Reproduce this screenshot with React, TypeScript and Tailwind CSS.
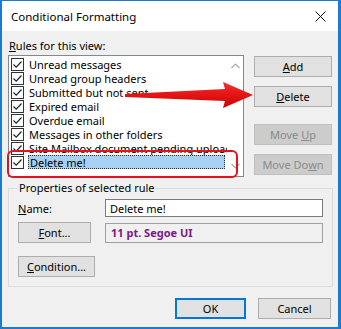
import React from 'react';

// Conditional Formatting dialog (Outlook, Windows 10 look)

const font = { fontFamily: '"Noto Sans", "Open Sans", Arial, sans-serif' };

const rules = [
  'Unread messages',
  'Unread group headers',
  'Submitted but not sent',
  'Expired email',
  'Overdue email',
  'Messages in other folders',
  'Site Mailbox document pending upload',
  'Delete me!',
];

function Check() {
  return (
    <div className="w-[13px] h-[13px] shrink-0 border border-[#333] bg-white flex items-center justify-center">
      <svg width="11" height="11" viewBox="0 0 11 11" fill="none" stroke="#222" strokeWidth="1.2">
        <path d="M1.5 5.5 L4.2 8.2 L9.5 2.5" />
      </svg>
    </div>
  );
}

function Btn({
  children,
  disabled,
  primary,
  className = '',
}: {
  children: React.ReactNode;
  disabled?: boolean;
  primary?: boolean;
  className?: string;
}) {
  const tone = disabled
    ? 'bg-[#cccccc] border-[#bfbfbf] text-[#8a8a8a]'
    : primary
      ? 'bg-[#e1e1e1] border-2 border-[#0078d7] text-black'
      : 'bg-[#e1e1e1] border-[#adadad] text-black';
  return (
    <div className={`h-[21px] border flex items-center justify-center text-[11px] ${tone} ${className}`}>
      {children}
    </div>
  );
}

export default function App() {
  return (
    <div
      style={font}
      className="relative w-[341px] h-[329px] bg-[#f0f0f0] border-l-2 border-t border-r-[3px] border-b-2 border-[#1a7bd2] overflow-hidden text-[11px] text-black leading-[13px]"
    >
      {/* Заголовок окна */}
      <div className="h-[30px] bg-white flex items-center justify-between pl-[9px] pr-[12px]">
        <span className="text-[11.5px]">Conditional Formatting</span>
        <svg width="11" height="11" viewBox="0 0 11 11" stroke="#111" strokeWidth="1">
          <path d="M0.5 0.5 L10.5 10.5 M10.5 0.5 L0.5 10.5" />
        </svg>
      </div>

      <div className="pl-[6px] pr-[6px] pt-[8px]">
        <div className="h-[16px] pl-[1px]">
          <span className="underline">R</span>ules for this view:
        </div>

        <div className="flex">
          {/* Список правил */}
          <div className="w-[236px] h-[122px] border border-[#828790] bg-white flex">
            <div className="flex-1 overflow-hidden pt-[1px] pl-[2px]">
              {rules.map((r, i) => (
                <div key={r} className="h-[14px] flex items-center gap-[4px] whitespace-nowrap">
                  <Check />
                  <span
                    className={
                      i === rules.length - 1
                        ? 'h-[14px] flex items-center px-[1px] bg-[#a6d1f3] border border-dotted border-[#333] w-[197px]'
                        : 'px-[1px]'
                    }
                  >
                    {r}
                  </span>
                </div>
              ))}
            </div>
            <div className="w-[16px] flex flex-col justify-between items-center py-[7px] bg-white">
              <svg width="9" height="6" viewBox="0 0 9 6" fill="none" stroke="#a8a8a8" strokeWidth="1.2">
                <path d="M0.5 5 L4.5 1 L8.5 5" />
              </svg>
              <svg width="9" height="6" viewBox="0 0 9 6" fill="none" stroke="#a8a8a8" strokeWidth="1.2">
                <path d="M0.5 1 L4.5 5 L8.5 1" />
              </svg>
            </div>
          </div>

          {/* Кнопки справа */}
          <div className="ml-[10px] w-[78px] flex flex-col">
            <Btn className="mt-[1px]">
              <span className="underline">A</span>dd
            </Btn>
            <Btn className="mt-[9px]">
              <span className="underline">D</span>elete
            </Btn>
            <Btn disabled className="mt-[17px]">
              Move&nbsp;<span className="underline">U</span>p
            </Btn>
            <Btn disabled className="mt-[9px]">
              Move Do<span className="underline">w</span>n
            </Btn>
          </div>
        </div>

        {/* Свойства выбранного правила */}
        <fieldset className="mt-[4px] mr-[2px] border border-[#dcdcdc] h-[106px] px-[9px]">
          <legend className="px-[1px] leading-[14px]">Properties of selected rule</legend>
          <div className="flex items-center mt-[4px]">
            <div className="w-[87px]">
              <span className="underline">N</span>ame:
            </div>
            <div className="w-[218px] h-[18px] border border-[#7a7a7a] bg-white flex items-center pl-[4px]">
              Delete me!
            </div>
          </div>
          <div className="flex items-center mt-[5px]">
            <Btn className="w-[73px] h-[21px]">
              <span className="underline">F</span>ont...
            </Btn>
            <div className="ml-[14px] w-[218px] h-[20px] border border-[#a0a0a0] bg-[#f0f0f0] flex items-center pl-[5px] font-bold text-[#7b1a86]">
              11 pt. Segoe UI
            </div>
          </div>
          <Btn className="w-[77px] mt-[13px]">
            <span className="underline">C</span>ondition...
          </Btn>
        </fieldset>

        <div className="flex justify-end mt-[11px] pr-[1px] gap-[12px]">
          <Btn primary className="w-[71px]">
            OK
          </Btn>
          <Btn className="w-[73px]">Cancel</Btn>
        </div>
      </div>

      {/* Пометки поверх: красная рамка и стрелка */}
      <div className="absolute left-[5px] top-[149px] w-[231px] h-[28px] border-2 border-[#e3121b] rounded-[6px] pointer-events-none" />
      <svg className="absolute left-0 top-0 pointer-events-none" width="341" height="329" viewBox="0 0 341 329">
        <defs>
          <linearGradient id="ar" x1="0" y1="0" x2="0" y2="1">
            <stop offset="0" stopColor="#ff2a2a" />
            <stop offset="1" stopColor="#c80000" />
          </linearGradient>
        </defs>
        <polygon points="123,93 223,88 221,81 251,94 221,107 223,100 123,96" fill="url(#ar)" />
      </svg>
    </div>
  );
}
